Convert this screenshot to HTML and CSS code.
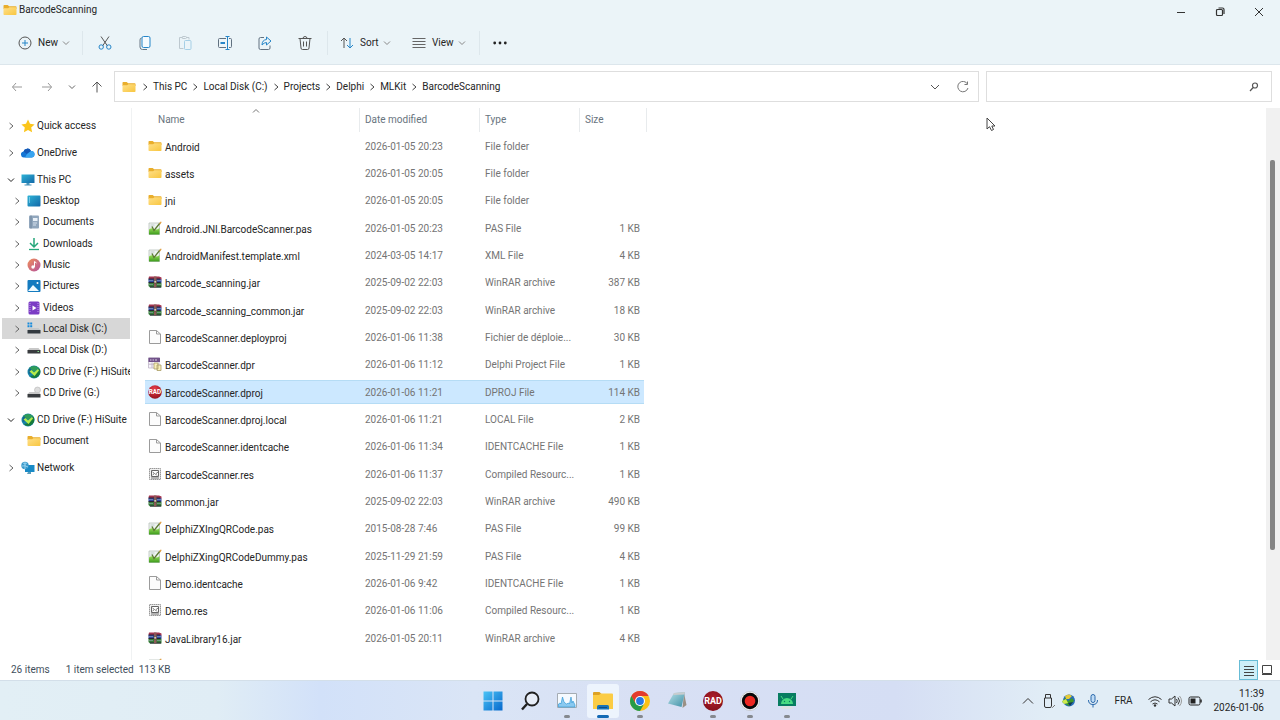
FILE: index.html
```html
<!DOCTYPE html>
<html lang="en">
<head>
<meta charset="utf-8">
<meta name="viewport" content="width=device-width, initial-scale=1">
<title>BarcodeScanning</title>
<link rel="stylesheet" href="styles.css">
</head>
<body>
<svg class="defs" aria-hidden="true">
  <defs>
    <linearGradient id="g-folder" x1="0" y1="0" x2="1" y2="1"><stop offset="0" stop-color="#ffe08a"/><stop offset="1" stop-color="#f8c640"/></linearGradient>
    <linearGradient id="g-screen" x1="0" y1="0" x2="1" y2="1"><stop offset="0" stop-color="#2fb3d6"/><stop offset="1" stop-color="#1268a8"/></linearGradient>
    <linearGradient id="g-music" x1="0" y1="0" x2="1" y2="1"><stop offset="0" stop-color="#f0905a"/><stop offset="1" stop-color="#b4509c"/></linearGradient>
    <linearGradient id="g-win" x1="0" y1="0" x2="1" y2="1"><stop offset="0" stop-color="#4cc4f6"/><stop offset="1" stop-color="#0668cc"/></linearGradient>
    <linearGradient id="g-note" x1="0" y1="0" x2="1" y2="1"><stop offset="0" stop-color="#b9e2e8"/><stop offset="1" stop-color="#3e8fa6"/></linearGradient>
    <linearGradient id="g-grass" x1="0" y1="0" x2="0" y2="1"><stop offset="0" stop-color="#9ade5a"/><stop offset="1" stop-color="#3b9a1c"/></linearGradient>
    <radialGradient id="g-rad" cx=".45" cy=".3" r=".7"><stop offset="0" stop-color="#e8404c"/><stop offset="1" stop-color="#96101e"/></radialGradient>
    <radialGradient id="g-radapp" cx=".5" cy=".4" r=".7"><stop offset="0" stop-color="#b3202c"/><stop offset="1" stop-color="#7c0d18"/></radialGradient>
    <symbol id="folder" viewBox="0 0 14 12"><path d="M.5 1.8q0-.8.8-.8h3.4l1.400 1.300h6.600q.8 0 .8.8V5H.5z" fill="#e9ae2c"/><path d="M.5 4.200h4.600l1.300-1h6.300q.8 0 .8.8v6.200q0 .8-.8.8H1.300q-.8 0-.8-.8z" fill="url(#g-folder)"/></symbol>
    <symbol id="chev" viewBox="0 0 8 8"><path d="M2.500 1 6 4 2.500 7" fill="none" stroke="currentColor"/></symbol>
    <symbol id="down" viewBox="0 0 8 8"><path d="M1 2.500 4 5.500 7 2.500" fill="none" stroke="currentColor"/></symbol>
    <symbol id="page" viewBox="0 0 14 14"><path d="M1.500.500h7L12.500 4v9.500h-11z" fill="#fcfcfc" stroke="#9b9b9b"/><path d="M8.500.500V4h4" fill="none" stroke="#9b9b9b"/></symbol>
    <symbol id="edit" viewBox="0 0 14 14"><path d="M1 2h10.500v11.500H1z" fill="#eef3f1" stroke="#b9c2bd" stroke-width=".8"/><path d="M1 8.500q2.500-2 5-.5t5.500-1v6.500H1z" fill="url(#g-grass)"/><path d="M2.500 4h4M2.500 6h3" stroke="#c3cccc"/><path d="M4 5.500 6 9.500 12 2" fill="none" stroke="#5d7a35" stroke-width="1.300"/><path d="m11.200 2.600 1.500-2.200 1 .700-1.600 2.300z" fill="#e19d40"/></symbol>
    <symbol id="rar" viewBox="0 0 14 13"><path d="M1 1h10l2.500 1v2.500H2L.5 3z" fill="#a2344f"/><path d="M.5 3.500h12l1 1v3H2L.5 6.500z" fill="#314d9d"/><path d="M.5 7h12l1 1v4H2L.5 10.500z" fill="#347b37"/><path d="M.5 3.500h11.500M.5 7h12M2 11.500h11" stroke="#262339"/><path d="M1 5h4M9 5h4M1 9h4M9 9h4" stroke="#aab3cc" stroke-width=".5"/><path d="M6 1h2.500v11H6z" fill="#8a5a56"/><path d="M6 5h2.500v2.500H6z" fill="#d8cdb8" stroke="#44372a" stroke-width=".5"/></symbol>
    <symbol id="dpr" viewBox="0 0 14 14"><path d="M.5 1h10.500v10H.5z" fill="#f6f3fa" stroke="#b8aec0" stroke-width=".7"/><path d="M.5.700H12v4.300H.5z" fill="#715189"/><path d="M2 3h1.500M4.500 3H6M7 3h2" stroke="#dcd0e5"/><path d="M.5 7.200h6M4 5.500V11" stroke="#c6b8cc"/><path d="M6 6h4v6H6zM9 8h4v5.500H9z" fill="#f8efbb" stroke="#aa9c65" stroke-width=".8"/></symbol>
    <symbol id="rad" viewBox="0 0 20 20"><circle cx="10" cy="10" r="9.700" fill="url(#g-rad)"/><text x="10" y="13" text-anchor="middle" class="rad-label">RAD</text></symbol>
    <symbol id="res" viewBox="0 0 14 14"><path d="M1.500 1.500h11v11h-11z" fill="#f1f1f1" stroke="#999" stroke-dasharray="1.500 .5"/><path d="M3.500 3.500h7v6h-7z" fill="#fff" stroke="#666"/><path d="m4.500 5 2 1.500-2 1.500M10 5 7.500 7 9 8.500M3 11h8" fill="none" stroke="#666" stroke-width=".9"/></symbol>
    <symbol id="pc" viewBox="0 0 14 12"><path d="M.5.500h13v8.500H.5z" fill="url(#g-screen)"/><path d="M5.500 9h3v1.500h2v1H3.500v-1h2z" fill="#4994ba"/></symbol>
    <symbol id="drive" viewBox="0 0 14 12"><path d="m2.500 4-2 2.500h13l-2-2.500z" fill="#c8c8c8"/><path d="M.5 6h13v3.500H.5z" fill="#393c3f"/><path d="M10.500 7.500H12" stroke="#84dc8d"/></symbol>
    <symbol id="windrive" viewBox="0 0 14 14"><path d="m2.500 6-2 2h13l-2-2z" fill="#c3c7ca"/><path d="M.5 8h13v3.500H.5z" fill="#333a40"/><path d="M.5.500h2v2h-2zM3.200.500h2v2h-2zM.5 3.200h2v2h-2zM3.200 3.200h2v2h-2z" fill="#168bdc"/></symbol>
    <symbol id="cd" viewBox="0 0 14 14"><circle cx="10.500" cy="4" r="3" fill="#ddd" stroke="#aaa" stroke-width=".5"/><path d="m2.500 6-2 2h13l-2-2z" fill="#c8c8c8"/><path d="M.5 8h13v3.500H.5z" fill="#393c3f"/></symbol>
    <symbol id="suite" viewBox="0 0 14 14"><circle cx="7" cy="7" r="6.500" fill="#1684a8"/><path d="M2 3Q7-1 12 3L7 7z" fill="#2f9c58"/><path d="M12 3q3 4-.5 8Q7 15 3 11l5-1z" fill="#187a3a"/><path d="M2 9Q1 5 3 3l3 4z" fill="#16658d"/><path d="m2.500 6.500 2-1.500L7 7.500 11 4l1 1.500L7.500 11z" fill="#b5ec4a"/></symbol>
  </defs>
</svg>

<main class="window">
  <header class="chrome">
    <div class="titlebar">
      <svg class="i14"><use href="#folder"/></svg><h1 class="title">BarcodeScanning</h1>
      <div class="caption">
        <button aria-label="Minimize"><svg class="i10" viewBox="0 0 10 10"><path d="M1 5.500h8" stroke="#333"/></svg></button>
        <button aria-label="Restore"><svg class="i10" viewBox="0 0 10 10"><rect x="1.500" y="2.500" width="6" height="6" rx="1" fill="none" stroke="#333" stroke-width="1.200"/><path d="M3.500 1H7.500Q9 1 9 2.500V7" fill="none" stroke="#333" stroke-width="1.200"/></svg></button>
        <button aria-label="Close"><svg class="i10" viewBox="0 0 10 10"><path d="m1 1 8 8M9 1 1 9" stroke="#333"/></svg></button>
      </div>
    </div>
    <div class="toolbar">
      <button class="tool wide"><svg class="i14" viewBox="0 0 14 14"><circle cx="7" cy="7" r="6" fill="none" stroke="#555"/><path d="M4 7h6M7 4v6" stroke="#2585c8"/></svg>New<svg class="i8"><use href="#down"/></svg></button>
      <span class="sep"></span>
      <button class="tool" aria-label="Cut"><svg class="i14" viewBox="0 0 14 14"><path d="m3 .5 6.500 9.500M11 .5 4.500 10" stroke="#555"/><circle cx="3.200" cy="11" r="2.200" fill="none" stroke="#2585c8"/><circle cx="10.800" cy="11" r="2.200" fill="none" stroke="#2585c8"/></svg></button>
      <button class="tool" aria-label="Copy"><svg class="i14" viewBox="0 0 14 14"><rect x="4" y=".500" width="8" height="11" rx="1.500" fill="#f5fbff" stroke="#2585c8"/><path d="M3.500 2Q2 2 2 4v7q0 2.500 2.500 2.500H9" fill="none" stroke="#687784"/></svg></button>
      <button class="tool" aria-label="Paste" disabled><svg class="i14" viewBox="0 0 14 14"><path d="M5.500 12.500h-4v-11h3M8 1.500h3v2" fill="none" stroke="#bdc8cf"/><rect x="4" y=".500" width="4.500" height="2" rx="1" fill="none" stroke="#bdc8cf"/><rect x="6.500" y="4.500" width="6.500" height="9" rx="1" fill="none" stroke="#a5cfe6"/></svg></button>
      <button class="tool" aria-label="Rename"><svg class="i14" viewBox="0 0 14 14"><path d="M8 2.500H1.500Q.5 2.500.5 3.500v7q0 1 1 1H8M11 2.500h1.500q1 0 1 1v7q0 1-1 1H11" fill="none" stroke="#607180"/><path d="M9.500 1v12M7.500.500h4M7.500 13.500h4" stroke="#2585c8"/><path d="M2.500 7H7" stroke="#2585c8" stroke-width="2"/></svg></button>
      <button class="tool" aria-label="Share"><svg class="i14" viewBox="0 0 14 14"><path d="M6 1.500H2.500Q1 1.500 1 3v9q0 1.500 1.500 1.500h8Q12 13.500 12 12V9.500" fill="none" stroke="#607180"/><path d="M8.500 1v2.500Q4 4 4 9q2-2.500 4.500-2.500V9L13 5z" fill="none" stroke="#2585c8" stroke-linejoin="round"/></svg></button>
      <button class="tool" aria-label="Delete"><svg class="i14" viewBox="0 0 14 14"><path d="M.5 2.500h13M5 2.500Q5 .5 7 .5t2 2M2 2.500l1 9.500q0 1.500 1.500 1.500h5Q11 13.500 11 12l1-9.500M5.500 5.500v5M8.500 5.500v5" fill="none" stroke="#555"/></svg></button>
      <span class="sep"></span>
      <button class="tool wide"><svg class="i14" viewBox="0 0 14 14"><path d="M4 12V2M1 5l3-3 3 3" fill="none" stroke="#555"/><path d="M10 2v10M7 9l3 3 3-3" fill="none" stroke="#2585c8"/></svg>Sort<svg class="i8"><use href="#down"/></svg></button>
      <button class="tool wide"><svg class="i14" viewBox="0 0 14 14"><path d="M.5 2.500h13M.5 5.500h13M.5 8.500h13M.5 11.500h13" stroke="#666"/></svg>View<svg class="i8"><use href="#down"/></svg></button>
      <span class="sep view-sep"></span>
      <button class="tool" aria-label="See more"><svg class="i14" viewBox="0 0 14 14"><g fill="#222"><circle cx="1.700" cy="7" r="1.400"/><circle cx="7" cy="7" r="1.400"/><circle cx="12.300" cy="7" r="1.400"/></g></svg></button>
    </div>
  </header>

  <div class="navbar">
    <div class="navbuttons">
      <button aria-label="Back"><svg class="i12" viewBox="0 0 12 12"><path d="M11 6H1.500M5 2 1.500 6 5 10" fill="none" stroke="#999"/></svg></button>
      <button aria-label="Forward"><svg class="i12" viewBox="0 0 12 12"><path d="M1 6h9.500M7 2l3.500 4L7 10" fill="none" stroke="#999"/></svg></button>
      <button class="slim" aria-label="Recent locations"><svg class="i8"><use href="#down"/></svg></button>
      <button aria-label="Up"><svg class="i12" viewBox="0 0 12 12"><path d="M6 11.500V1M1.500 5.500 6 1l4.500 4.500" fill="none" stroke="#555"/></svg></button>
    </div>
    <nav class="address" aria-label="Address">
      <svg class="i14"><use href="#folder"/></svg>
      <svg class="crumb"><use href="#chev"/></svg><a href="#">This PC</a>
      <svg class="crumb"><use href="#chev"/></svg><a href="#">Local Disk (C:)</a>
      <svg class="crumb"><use href="#chev"/></svg><a href="#">Projects</a>
      <svg class="crumb"><use href="#chev"/></svg><a href="#">Delphi</a>
      <svg class="crumb"><use href="#chev"/></svg><a href="#">MLKit</a>
      <svg class="crumb"><use href="#chev"/></svg><a href="#">BarcodeScanning</a>
      <span class="address-actions">
        <button aria-label="Previous locations"><svg class="i10" viewBox="0 0 10 10"><path d="m1 3 4 4 4-4" fill="none" stroke="#555"/></svg></button>
        <button aria-label="Refresh"><svg class="i12" viewBox="0 0 12 12"><path d="M10.500 3A5.200 5.200 0 1 0 11 7M10.500.500V3.500H7.500" fill="none" stroke="#777"/></svg></button>
      </span>
    </nav>
    <div class="search"><input type="search" aria-label="Search BarcodeScanning"><svg class="i10" viewBox="0 0 10 10"><circle cx="6" cy="3.500" r="2.500" fill="none" stroke="#555" stroke-width="1.200"/><path d="M4.200 5.500 1 9" stroke="#555" stroke-width="1.200"/></svg></div>
  </div>

  <div class="content">
    <nav class="sidebar" aria-label="Folders">
      <ul class="tree">
        <li><a href="#"><svg class="i8"><use href="#chev"/></svg><svg class="i14" viewBox="0 0 14 14"><path d="m7 .500 2 4.300 4.600.600-3.400 3.200.900 4.700L7 11l-4.100 2.300.900-4.700L.4 5.400 5 4.800z" fill="#fbc51b"/></svg>Quick access</a></li>
        <li><a href="#"><svg class="i8"><use href="#chev"/></svg><svg class="i14" viewBox="0 0 14 14"><path d="M3.500 11.500a3 3 0 0 1-1-6A4 4 0 0 1 10 5a3.300 3.300 0 0 1 1 6.500z" fill="#1475d4"/><path d="M2.500 5.500A4 4 0 0 1 10 5L6 8z" fill="#1558b5"/><path d="m6 8 4-3a3.300 3.300 0 0 1 1 6.500H4z" fill="#38a4f0"/></svg>OneDrive</a></li>
        <li><a href="#"><svg class="i8 open"><use href="#down"/></svg><svg class="i14"><use href="#pc"/></svg>This PC</a>
          <ul class="branch">
            <li><a href="#"><svg class="i8"><use href="#chev"/></svg><svg class="i14" viewBox="0 0 14 12"><rect x=".5" y=".5" width="13" height="11" rx="1" fill="url(#g-screen)"/><path d="M2 3h1M2 5h1M2 7h1" stroke="#bceaff"/></svg>Desktop</a></li>
            <li><a href="#"><svg class="i8"><use href="#chev"/></svg><svg class="i14" viewBox="0 0 14 14"><rect x="2" y=".500" width="10" height="13" rx="1" fill="#91a6bc"/><path d="M4 .500v13" stroke="#6e859d"/><path d="M6 3h4.500v3H6z" fill="#eaf1f8"/><path d="M6 8h4M6 10h3" stroke="#d7e2ee"/></svg>Documents</a></li>
            <li><a href="#"><svg class="i8"><use href="#chev"/></svg><svg class="i14" viewBox="0 0 14 14"><path d="M7 1v8.500M3 6l4 4 4-4" fill="none" stroke="#26a77b" stroke-width="1.500"/><path d="M2 12.500h10" stroke="#26a77b" stroke-width="1.300"/></svg>Downloads</a></li>
            <li><a href="#"><svg class="i8"><use href="#chev"/></svg><svg class="i14" viewBox="0 0 14 14"><circle cx="7" cy="7" r="6.500" fill="url(#g-music)"/><path d="M7.500 9V3.500L9.500 5" fill="none" stroke="#fff"/><circle cx="6" cy="9" r="1.700" fill="#fff"/></svg>Music</a></li>
            <li><a href="#"><svg class="i8"><use href="#chev"/></svg><svg class="i14" viewBox="0 0 14 14"><rect x=".5" y="1" width="13" height="12" rx="1" fill="#147bbf"/><path d="m1 12 5-6 6 6z" fill="#f0fbff"/><circle cx="10.500" cy="4" r="1" fill="#fff"/></svg>Pictures</a></li>
            <li><a href="#"><svg class="i8"><use href="#chev"/></svg><svg class="i14" viewBox="0 0 14 14"><rect x="1.500" y=".500" width="11" height="13" rx="1.500" fill="#7b3cc4"/><path d="M3 2v10M11 2v10" stroke="#c49cee" stroke-dasharray="1 1"/><path d="m5.500 4.500 4 2.500-4 2.500z" fill="#fff"/></svg>Videos</a></li>
            <li><a href="#" class="current" aria-current="true"><svg class="i8"><use href="#chev"/></svg><svg class="i14"><use href="#windrive"/></svg>Local Disk (C:)</a></li>
            <li><a href="#"><svg class="i8"><use href="#chev"/></svg><svg class="i14"><use href="#drive"/></svg>Local Disk (D:)</a></li>
            <li><a href="#"><svg class="i8"><use href="#chev"/></svg><svg class="i14"><use href="#suite"/></svg>CD Drive (F:) HiSuite</a></li>
            <li><a href="#"><svg class="i8"><use href="#chev"/></svg><svg class="i14"><use href="#cd"/></svg>CD Drive (G:)</a></li>
          </ul>
        </li>
        <li><a href="#"><svg class="i8 open"><use href="#down"/></svg><svg class="i14"><use href="#suite"/></svg>CD Drive (F:) HiSuite</a>
          <ul class="branch"><li><a href="#"><span class="i8"></span><svg class="i14"><use href="#folder"/></svg>Document</a></li></ul>
        </li>
        <li><a href="#"><svg class="i8"><use href="#chev"/></svg><svg class="i14" viewBox="0 0 14 14"><path d="M4 4h9.500v7H4z" fill="#188ac6"/><path d="M7 11h3v2H6z" fill="#5b9dbb"/><circle cx="4" cy="4.500" r="3.700" fill="#3a99cb"/><path d="M2 2q2 2 4 0M1 5q3-1 6 1M4 1v7" fill="none" stroke="#a8dcf2" stroke-width=".8"/></svg>Network</a></li>
      </ul>
    </nav>

    <section class="files" aria-label="Files">
      <table class="filetable">
        <colgroup><col class="c-name"><col class="c-date"><col class="c-type"><col class="c-size"></colgroup>
        <thead><tr><th aria-sort="ascending">Name<svg class="sort i8" viewBox="0 0 8 8"><path d="m1 4.500 3-3 3 3" fill="none" stroke="#777"/></svg></th><th>Date modified</th><th>Type</th><th>Size</th></tr></thead>
        <tbody>
          <tr><td><svg class="i14"><use href="#folder"/></svg>Android</td><td>2026-01-05 20:23</td><td>File folder</td><td></td></tr>
          <tr><td><svg class="i14"><use href="#folder"/></svg>assets</td><td>2026-01-05 20:05</td><td>File folder</td><td></td></tr>
          <tr><td><svg class="i14"><use href="#folder"/></svg>jni</td><td>2026-01-05 20:05</td><td>File folder</td><td></td></tr>
          <tr><td><svg class="i14"><use href="#edit"/></svg>Android.JNI.BarcodeScanner.pas</td><td>2026-01-05 20:23</td><td>PAS File</td><td>1 KB</td></tr>
          <tr><td><svg class="i14"><use href="#edit"/></svg>AndroidManifest.template.xml</td><td>2024-03-05 14:17</td><td>XML File</td><td>4 KB</td></tr>
          <tr><td><svg class="i14"><use href="#rar"/></svg>barcode_scanning.jar</td><td>2025-09-02 22:03</td><td>WinRAR archive</td><td>387 KB</td></tr>
          <tr><td><svg class="i14"><use href="#rar"/></svg>barcode_scanning_common.jar</td><td>2025-09-02 22:03</td><td>WinRAR archive</td><td>18 KB</td></tr>
          <tr><td><svg class="i14"><use href="#page"/></svg>BarcodeScanner.deployproj</td><td>2026-01-06 11:38</td><td>Fichier de déploie...</td><td>30 KB</td></tr>
          <tr><td><svg class="i14"><use href="#dpr"/></svg>BarcodeScanner.dpr</td><td>2026-01-06 11:12</td><td>Delphi Project File</td><td>1 KB</td></tr>
          <tr class="selected"><td><svg class="i14"><use href="#rad"/></svg>BarcodeScanner.dproj</td><td>2026-01-06 11:21</td><td>DPROJ File</td><td>114 KB</td></tr>
          <tr><td><svg class="i14"><use href="#page"/></svg>BarcodeScanner.dproj.local</td><td>2026-01-06 11:21</td><td>LOCAL File</td><td>2 KB</td></tr>
          <tr><td><svg class="i14"><use href="#page"/></svg>BarcodeScanner.identcache</td><td>2026-01-06 11:34</td><td>IDENTCACHE File</td><td>1 KB</td></tr>
          <tr><td><svg class="i14"><use href="#res"/></svg>BarcodeScanner.res</td><td>2026-01-06 11:37</td><td>Compiled Resourc...</td><td>1 KB</td></tr>
          <tr><td><svg class="i14"><use href="#rar"/></svg>common.jar</td><td>2025-09-02 22:03</td><td>WinRAR archive</td><td>490 KB</td></tr>
          <tr><td><svg class="i14"><use href="#edit"/></svg>DelphiZXIngQRCode.pas</td><td>2015-08-28 7:46</td><td>PAS File</td><td>99 KB</td></tr>
          <tr><td><svg class="i14"><use href="#edit"/></svg>DelphiZXingQRCodeDummy.pas</td><td>2025-11-29 21:59</td><td>PAS File</td><td>4 KB</td></tr>
          <tr><td><svg class="i14"><use href="#page"/></svg>Demo.identcache</td><td>2026-01-06 9:42</td><td>IDENTCACHE File</td><td>1 KB</td></tr>
          <tr><td><svg class="i14"><use href="#res"/></svg>Demo.res</td><td>2026-01-06 11:06</td><td>Compiled Resourc...</td><td>1 KB</td></tr>
          <tr><td><svg class="i14"><use href="#rar"/></svg>JavaLibrary16.jar</td><td>2026-01-05 20:11</td><td>WinRAR archive</td><td>4 KB</td></tr>
          <tr><td><svg class="i14"><use href="#edit"/></svg></td><td></td><td></td><td></td></tr>
        </tbody>
      </table>
    </section>
    <div class="scrollbar"><div class="thumb"></div></div>
  </div>

  <footer class="status">
    <span>26 items</span><span class="picked">1 item selected</span><span>113 KB</span>
    <div class="modes">
      <button class="on" aria-label="Details view"><svg class="i12" viewBox="0 0 12 12"><path d="M1 2.500h10M1 5.500h10M1 8.500h10M1 11.500h10" stroke="#444"/></svg></button>
      <button aria-label="Large thumbnails"><svg class="i12" viewBox="0 0 12 12"><path d="M1.500 1.500h9v8h-9z" fill="#fff" stroke="#444"/><path d="M1 10.500h10" stroke="#444"/></svg></button>
    </div>
  </footer>
</main>

<footer class="taskbar">
  <div class="apps">
    <button aria-label="Start"><svg class="i20" viewBox="0 0 20 20"><path d="M.5.500h9v9h-9zM10.500.500h9v9h-9zM.5 10.500h9v9h-9zM10.500 10.500h9v9h-9z" fill="url(#g-win)"/></svg></button>
    <button aria-label="Search"><svg class="i20" viewBox="0 0 20 20"><circle cx="12" cy="8" r="6.500" fill="#e8eef8" stroke="#202020" stroke-width="1.800"/><path d="m7 13-5 5.500" stroke="#202020" stroke-width="2.400"/></svg></button>
    <button class="running" aria-label="Task Manager"><svg class="i20" viewBox="0 0 20 20"><path d="M.5 2.500h19v14H.5z" fill="#f5faff" stroke="#a5acb3"/><path d="M1.500 16V13l1.500-1 1 1 1.500-7L7 11l1 1 1.500 1 2-1 1 1L14 6l1 6 1-2 2 4v2z" fill="#8ac9f0" stroke="#389cd8" stroke-width=".7"/></svg></button>
    <button class="running active" aria-label="File Explorer"><svg class="i20" viewBox="0 0 20 20"><path d="M0 2q0-1 1-1h5.500l2 2V6H0z" fill="#dda225"/><path d="M0 4h6l2-1.500h11q1 0 1 1V18H0z" fill="#fbcc45"/><path d="M4 18.500v-3q0-1.500 1.500-1.500h9q1.500 0 1.500 1.500v3z" fill="#1974b7"/><path d="M6 16.500h8" stroke="#104c86"/></svg></button>
    <button class="running" aria-label="Chrome"><svg class="i20" viewBox="0 0 20 20"><circle cx="10" cy="10" r="10" fill="#fbc116"/><path d="M1.340 5A10 10 0 0 1 18.660 5H10L5.670 12.500z" fill="#e33b2e"/><path d="M1.340 5A10 10 0 0 0 10 20l4.330-7.500L10 15 5.670 12.500z" fill="#259b4a"/><circle cx="10" cy="10" r="5" fill="#fff"/><circle cx="10" cy="10" r="3.900" fill="#2878e4"/></svg></button>
    <button aria-label="Notepad"><svg class="i20" viewBox="0 0 20 20"><path d="m17 2 2.500 12-4 3z" fill="#9a9084"/><path d="m7 2 11-1-3.500 15L1 12.500z" fill="url(#g-note)"/><path d="m7 2 11-1-.5 2.500-11.500.5z" fill="#c9ccce"/></svg></button>
    <button class="running" aria-label="RAD Studio"><svg class="i20" viewBox="0 0 20 20"><circle cx="10" cy="10" r="10" fill="url(#g-radapp)"/><text x="10" y="13" text-anchor="middle" class="rad-label">RAD</text></svg></button>
    <button class="running" aria-label="Recorder"><svg class="i20" viewBox="0 0 20 20"><circle cx="10" cy="10" r="9.500" fill="#f8f8f8" stroke="#b5b5b5" stroke-width=".6"/><circle cx="10" cy="10" r="8.200" fill="#090909"/><circle cx="10" cy="10" r="5.300" fill="#ef2821"/></svg></button>
    <button class="running" aria-label="Android"><svg class="i20" viewBox="0 0 20 20"><path d="M5 14h10l1 4H4z" fill="#dce2e3"/><path d="M1 2h18v13H1z" fill="#087d61"/><path d="M4 13a6 6 0 0 1 12 0z" fill="#48dc82"/><path d="m6 8-2-3m10 3 2-3" stroke="#48dc82"/><circle cx="7.500" cy="10.500" r=".700" fill="#087d61"/><circle cx="12.500" cy="10.500" r=".700" fill="#087d61"/></svg></button>
  </div>
  <div class="tray">
    <div class="trayset">
      <button aria-label="Hidden icons"><svg class="i12" viewBox="0 0 12 12"><path d="m1 8.500 5-5 5 5" fill="none" stroke="#333"/></svg></button>
      <button aria-label="USB"><svg class="i14" viewBox="0 0 14 14"><path d="M4.500 4V.500h5V4M3.500 4h7v8q0 1.500-1.500 1.500H5Q3.500 13.500 3.500 12z" fill="none" stroke="#333"/><path d="m10 12 1.500 1.500L14 11" fill="none" stroke="#777"/></svg></button>
      <button aria-label="Download manager"><svg class="i14" viewBox="0 0 14 14"><circle cx="8" cy="6.500" r="6" fill="#286eb8"/><path d="M4 2q4-3 7 0L8 5H5z" fill="#e6cb37"/><path d="m1 8 3-4 3 3 4-3 2 3-5 5z" fill="#3c992c"/><path d="m1 7 4-2 2 4-4 1z" fill="#cfea51"/><path d="m7 9 5-1-3 4z" fill="#123a57"/></svg></button>
    </div>
    <button aria-label="Microphone"><svg class="i14" viewBox="0 0 14 14"><rect x="5" y=".500" width="4" height="8" rx="2" fill="#bfdcf5" stroke="#2a69ac"/><path d="M2.500 6q0 4.500 4.500 4.500T11.500 6M7 10.500v3" fill="none" stroke="#2a69ac"/></svg></button>
    <button class="lang">FRA</button>
    <div class="trayset">
      <button aria-label="Wi-Fi"><svg class="i14" viewBox="0 0 14 14"><path d="M.5 5.500q6.500-5.500 13 0M2.500 7.800q4.500-4 9 0M4.500 10q2.500-2 5 0" fill="none" stroke="#333"/><circle cx="7" cy="11.500" r="1.200" fill="#333"/></svg></button>
      <button aria-label="Volume"><svg class="i14" viewBox="0 0 14 14"><path d="M1 5h2.500L7 2v10L3.500 9H1z" fill="none" stroke="#333"/><path d="M8.500 5q1.500 2 0 4M10 3.500q3 3.500 0 7" fill="none" stroke="#333"/><path d="M11.500 2q4 5 0 10" fill="none" stroke="#999"/></svg></button>
      <button aria-label="Battery"><svg class="i14" viewBox="0 0 14 14"><rect x="1" y="3" width="11" height="8" rx="1.500" fill="none" stroke="#222"/><path d="M2.500 4.500h5v5h-5z" fill="#222"/><path d="M13 5.500v3" stroke="#222" stroke-width="1.500"/></svg></button>
    </div>
    <button class="clock"><time>11:39</time><time>2026-01-06</time></button>
  </div>
</footer>
<svg class="pointer" viewBox="0 0 10 15" aria-hidden="true"><path d="M1 1v11l2.500-2.300L5.500 13.500l2-1-1.700-3.500H9z" fill="#fff" stroke="#444"/></svg>
</body>
</html>
```
FILE: styles.css
```css
* { box-sizing: border-box; }

body {
  margin: 0;
  height: 100vh;
  display: flex;
  flex-direction: column;
  overflow: hidden;
  background: #fff;
  color: #252525;
  font: 10px/14px Roboto, "Open Sans", sans-serif;
}

button, input {
  margin: 0;
  padding: 0;
  border: 0;
  background: none;
  color: inherit;
  font: inherit;
}
button { display: flex; align-items: center; justify-content: center; }
a { color: inherit; text-decoration: none; }
ul { list-style: none; margin: 0; padding: 0; }
svg { flex: none; }

.defs { position: absolute; width: 0; height: 0; }
.i8 { width: 8px; height: 8px; flex: none; color: #666; }
.i10 { width: 10px; height: 10px; }
.i12 { width: 12px; height: 12px; }
.i14 { width: 14px; height: 14px; }
.i20 { width: 20px; height: 20px; }
.rad-label { fill: #fff; font: bold 9px Roboto, sans-serif; }

.window { flex: 1; min-height: 0; display: flex; flex-direction: column; }

/* Title bar and commands */
.chrome { background: #ebf4f8; border-bottom: 1px solid #dce6ec; }
.titlebar { display: flex; align-items: flex-start; height: 22px; padding: 3px 2px 0 3px; gap: 2px; }
.title { margin: 0; font-size: inherit; font-weight: 400; }
.caption { display: flex; margin-left: auto; }
.caption button { width: 39px; height: 18px; }

.toolbar { display: flex; align-items: center; height: 42px; padding: 0 8px 1px; }
.tool { width: 40px; height: 28px; }
.tool.wide { width: 72px; gap: 6px; justify-content: flex-start; padding-left: 10px; }
.tool.wide .i8 { margin-left: -2px; color: #888; }
.sep { width: 1px; height: 24px; margin: 0 2px; background: #dde7ec; }
.view-sep { margin-left: 5px; margin-right: 0; }

/* Navigation and address */
.navbar { display: flex; align-items: center; height: 43px; padding: 0 8px 0 2px; }
.navbuttons { display: flex; width: 112px; }
.navbuttons button { width: 30px; height: 28px; }
.navbuttons .slim { width: 20px; }
.address {
  flex: 1;
  display: flex;
  align-items: center;
  height: 31px;
  padding: 0 1px 0 7px;
  border: 1px solid #dedede;
}
.crumb { width: 8px; height: 8px; margin: 0 4px 0 5px; color: #444; }
.address a + .crumb { margin-left: 4px; }
.address a { white-space: nowrap; }
.address-actions { display: flex; margin-left: auto; }
.address-actions button { width: 28px; height: 28px; }
.search {
  flex: 0 1 286px;
  display: flex;
  align-items: center;
  height: 31px;
  margin-left: 7px;
  padding: 0 12px 0 8px;
  border: 1px solid #dedede;
}
.search input { flex: 1; min-width: 0; height: 28px; outline: 0; }

/* Body */
.content { flex: 1; min-height: 0; display: flex; overflow: hidden; }
.sidebar {
  width: 132px;
  padding: 7px 1px 0 2px;
  border-right: 1px solid #f0f2f3;
  overflow: hidden;
}
.tree { display: flex; flex-direction: column; gap: 6px; }
.tree a { display: flex; align-items: center; height: 21px; padding-left: 5px; overflow: hidden; white-space: nowrap; }
.tree a > :first-child { margin-right: 6px; }
.tree a > :nth-child(2) { margin-right: 2px; }
.tree .open { color: #222; }
.branch a { padding-left: 11px; }
.branch li:nth-child(3n+2) a { height: 22px; }
.tree .current { background: #d7d7d7; }

.files { flex: 1; min-width: 0; padding-left: 13px; overflow: hidden; }
.filetable { table-layout: fixed; width: 502px; border-collapse: separate; border-spacing: 0; color: #747474; }
.c-name { width: 215px; }
.c-date { width: 120px; }
.c-type { width: 100px; }
.c-size { width: 67px; }
.filetable th {
  position: relative;
  height: 24px;
  padding: 0 5px;
  border-right: 1px solid #e8ebed;
  color: #68747e;
  font-weight: 400;
  text-align: left;
}
.filetable th:first-child { padding-left: 13px; }
.sort { position: absolute; top: 0; left: 50%; }
.filetable td {
  height: 27px;
  padding: 1px 5px 0;
  border: 0 solid transparent;
  border-width: 2px 0;
  background-clip: padding-box;
  white-space: nowrap;
}
.filetable tr:nth-child(3n+1) td { height: 28px; }
.filetable td:first-child { padding-left: 3px; color: #252525; }
.filetable td:last-child { padding-right: 4px; border-right-width: 3px; text-align: right; }
.filetable td svg { margin-right: 3px; vertical-align: -2px; }
.filetable .selected td { background-color: #cce8ff; box-shadow: inset 0 1px #b5dcf5, inset 0 -1px #b5dcf5; }

.scrollbar { width: 14px; padding: 52px 5px 0 4px; background: #f1f1f1; }
.thumb { height: 78%; border-radius: 2px; background: #858585; }

.status { display: flex; align-items: center; height: 20px; padding: 0 5px 0 11px; color: #3f4f5c; }
.picked { margin: 0 5px 0 16px; }
.modes { display: flex; gap: 1px; margin-left: auto; }
.modes button { width: 16px; height: 20px; }
.modes .on { width: 19px; border: 1px solid #67bcd6; background: #cdeef8; }

/* Taskbar */
.taskbar {
  display: grid;
  grid-template-columns: 1fr 330px 1fr;
  align-items: center;
  height: 40px;
  border-top: 1px solid #d3dfe9;
  background: linear-gradient(90deg, #e2eff5 0, #e0edf5 17%, #d2e1f9 25%, #dae5f6 37%, #d8e0f4 50%, #d5def4 70%, #e1edf6 82%, #e1edf6 100%);
}
.apps { grid-column: 2; display: grid; grid-template-columns: repeat(9, 1fr); justify-items: center; }
.apps button { position: relative; width: 32px; height: 34px; border-radius: 3px; }
.apps .active { background: #edf4fd; }
.apps .running::after {
  content: "";
  position: absolute;
  bottom: 0;
  left: 50%;
  width: 6px;
  height: 3px;
  margin-left: -3px;
  border-radius: 2px;
  background: #85898f;
}
.apps .active::after { width: 12px; margin-left: -6px; background: #1269b5; }
.tray { display: flex; align-items: center; justify-content: flex-end; gap: 5px; padding-right: 16px; }
.trayset { display: flex; }
.tray button { width: 20px; height: 28px; }
.tray .lang { width: 32px; }
.tray .clock { width: auto; flex-direction: column; align-items: flex-end; margin-left: 4px; white-space: nowrap; }

/* Mouse pointer */
.pointer { position: absolute; left: 986px; top: 117px; width: 10px; height: 15px; }
```
